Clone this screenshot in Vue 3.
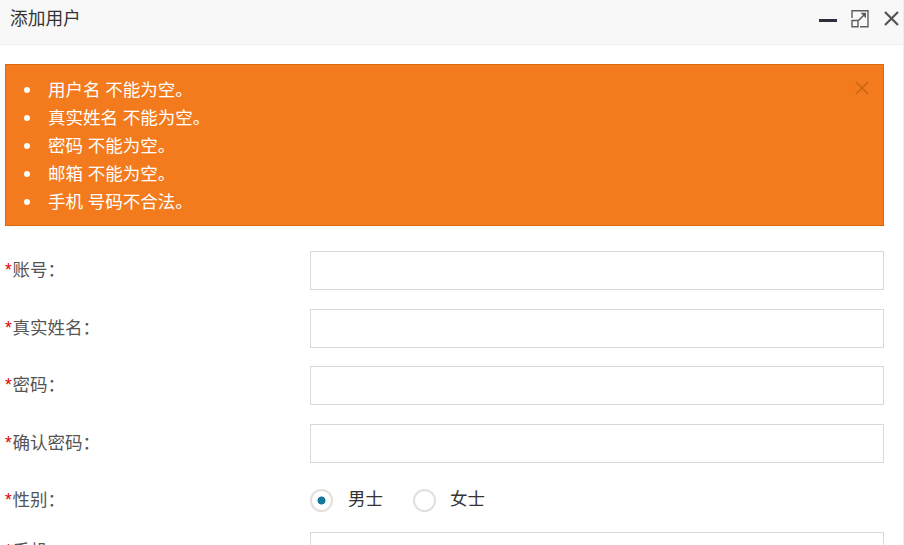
<script setup>
import { ref } from 'vue'

const errors = ref(['用户名 不能为空。', '真实姓名 不能为空。', '密码 不能为空。', '邮箱 不能为空。', '手机 号码不合法。'])
const showAlert = ref(true)
const gender = ref('男士')
const fields = [
  { label: '账号', type: 'text' },
  { label: '真实姓名', type: 'text' },
  { label: '密码', type: 'password' },
  { label: '确认密码', type: 'password' },
  { label: '性别', options: ['男士', '女士'] },
  { label: '手机', type: 'text' },
]
</script>

<template>
  <div class="dialog" lang="zh-CN">
    <header class="titlebar">
      <h1 class="title">添加用户</h1>
      <div class="tools">
        <svg class="tool" width="20" height="20" viewBox="0 0 20 20">
          <path d="M1 11.5H19" stroke="#2e2d3c" stroke-width="3" />
        </svg>
        <svg class="tool" width="20" height="20" viewBox="0 0 20 20" fill="none" stroke="#5a5e62" stroke-width="1.4">
          <path d="M2 9V1.7H18V17.7H10M2 11.5H8V17.7H2Z" />
          <path d="M8.5 11.5L15 5" stroke-width="1.6" />
          <path d="M10.5 3.7H16V9.2Z" fill="#5a5e62" stroke="none" />
        </svg>
        <svg class="tool" width="20" height="20" viewBox="0 0 20 20" fill="none" stroke="#505457" stroke-width="2.2">
          <path d="M3 3L16 16M16 3L3 16" />
        </svg>
      </div>
    </header>
    <main class="content">
      <section v-if="showAlert" class="alert">
        <ul class="errors">
          <li v-for="e in errors" :key="e">{{ e }}</li>
        </ul>
        <svg class="dismiss" width="14" height="14" viewBox="0 0 14 14" @click="showAlert = false">
          <path d="M1 1L13 13M13 1L1 13" stroke="#c96414" stroke-width="1.5" />
        </svg>
      </section>
      <form class="form">
        <div v-for="f in fields" :key="f.label" class="row">
          <span class="label"><span class="star">*</span>{{ f.label }}：</span>
          <div v-if="f.options" class="radios">
            <label v-for="o in f.options" :key="o" class="radio">
              <input v-model="gender" type="radio" name="gender" :value="o" />
              <span>{{ o }}</span>
            </label>
          </div>
          <input v-else class="field" :type="f.type" />
        </div>
      </form>
    </main>
  </div>
</template>

<style>
body {
  overflow: hidden;
  background: #fff;
}
</style>

<style scoped>
* {
  box-sizing: border-box;
}
.dialog {
  height: 545px;
  overflow: hidden;
  font: 17.5px/28px "Liberation Sans", "Noto Sans CJK SC", sans-serif;
  color: #333;
  border-right: 1px solid #ededed;
}
.titlebar {
  display: flex;
  justify-content: space-between;
  height: 45px;
  padding: 5px 1px 0 10px;
  margin-right: -1px;
  background: #f8f8f8;
  border-bottom: 1px solid #eee;
}
.title {
  margin: 0;
  font-size: 17.7px;
  font-weight: 400;
  color: #333;
}
.tools {
  display: flex;
  gap: 12px;
  padding: 4px 1px 0 0;
}
.tool {
  display: block;
}
.content {
  padding: 19px 19px 0 5px;
}
.alert {
  display: flex;
  justify-content: space-between;
  height: 162px;
  padding: 11px 14px 0 0;
  color: #fff;
  background: #f37b1d;
  border: 1px solid #d9690f;
}
.errors {
  margin: 0;
  padding: 0 0 0 18px;
  list-style: none;
}
.errors li {
  display: flex;
  align-items: center;
}
.errors li::before {
  content: "";
  width: 6px;
  height: 6px;
  margin-right: 18px;
  border-radius: 50%;
  background: #fff;
}
.dismiss {
  margin-top: 5px;
  cursor: pointer;
}
.form {
  display: flex;
  flex-direction: column;
  gap: 18.6px;
  margin-top: 25px;
}
.row {
  display: grid;
  grid-template-columns: 305px 1fr;
  height: 39px;
}
.row:has(.radios) {
  height: 31.6px;
}
.label {
  padding-top: 5px;
  color: #555;
}
.star {
  margin-right: 0.7px;
  color: #d00;
}
.field {
  width: 100%;
  height: 39px;
  padding: 0 10px;
  font: inherit;
  color: #555;
  background: #fff;
  border: 1px solid #d9d9d9;
  border-radius: 0;
  outline: none;
}
.radios {
  display: flex;
  gap: 30px;
  padding-top: 4px;
}
.radio {
  display: flex;
  gap: 15px;
}
.radio + .radio {
  gap: 14px;
}
.radio input {
  appearance: none;
  width: 23px;
  height: 23px;
  margin: 4px 0 0;
  border: 2px solid #e0e0e0;
  border-radius: 50%;
}
.radio input:checked {
  background: radial-gradient(circle, #147a9c 3.6px, transparent 4.4px);
  border-color: #e6deda;
}
</style>
